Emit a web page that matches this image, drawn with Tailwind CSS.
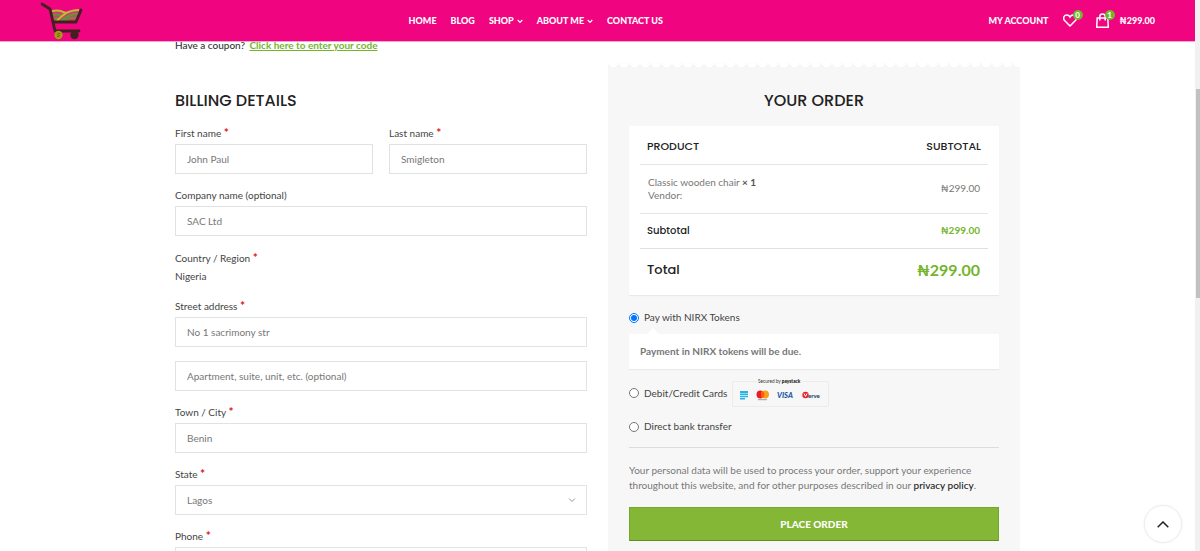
<!DOCTYPE html>
<html lang="en">
<head>
  <meta charset="UTF-8" />
  <meta name="viewport" content="width=device-width, initial-scale=1.0" />
  <title>Checkout</title>
  <script src="https://cdn.jsdelivr.net/npm/@tailwindcss/browser@4"></script>
</head>
<body class="flex h-screen overflow-hidden bg-white font-['Lato',sans-serif] text-[10px] leading-[15px] text-[#777]">

  <div class="relative min-w-0 flex-1 overflow-hidden">

    <!-- Header -->
    <header class="absolute inset-x-0 top-0 z-10 flex h-[42px] items-center justify-between border-b border-[#f7a8d2] bg-[#f0047f] px-10 text-white">
      <a href="#" aria-label="Home">
        <svg class="h-[38px] w-[43px]" viewBox="0 0 43 38" fill="none">
          <path d="M12 9h28l-4 11H14z" fill="#d93a6c" />
          <path d="M12 13c5-1 8 0 10 1M14 17c2-1 4-1 5 0M38 12c-7 0-13 3-18 8" stroke="#5b9a3c" stroke-width="1.800" />
          <path d="M12 9c6-1 11 0 14 3M39 8c-11 0-17 5-23 12" stroke="#b5c22c" stroke-width="2" />
          <path d="M24 19c4-3 8-4 12-3" stroke="#5b9a3c" stroke-width="1.800" />
          <path d="M2 2l8 5 5 22h24M13 20h23l5-12" stroke="#43201f" stroke-width="2.800" stroke-linecap="round" stroke-linejoin="round" />
          <circle cx="18.500" cy="33" r="4.200" fill="#a69a16" />
          <path d="M20 31.500c-3-1-3 1.500-1.500 1.500s1.500 2-1.500 1.500" stroke="#6d6410" />
          <circle cx="34.500" cy="33" r="4.200" fill="#43201f" />
        </svg>
      </a>

      <nav class="flex items-center gap-[14px] text-[9px] font-black">
        <a href="#">HOME</a>
        <a href="#">BLOG</a>
        <a href="#" class="flex items-center gap-[3px]">SHOP
          <svg class="size-[6px]" viewBox="0 0 6 6" fill="none" stroke="currentColor" stroke-width="1.200"><path d="M.7 2L3 4.300 5.300 2" /></svg>
        </a>
        <a href="#" class="flex items-center gap-[3px]">ABOUT ME
          <svg class="size-[6px]" viewBox="0 0 6 6" fill="none" stroke="currentColor" stroke-width="1.200"><path d="M.7 2L3 4.300 5.300 2" /></svg>
        </a>
        <a href="#">CONTACT US</a>
      </nav>

      <div class="flex items-center text-[9px] font-black">
        <a href="#">MY ACCOUNT</a>
        <a href="#" aria-label="Wishlist" class="relative ml-[14px]">
          <svg class="h-[13px] w-[14px]" viewBox="0 0 14 13" fill="none" stroke="currentColor" stroke-width="1.500"><path d="M7 12L1.600 6.500C-.5 4 1.200 1 3.800 1 5.400 1 6.500 2 7 3c.5-1 1.600-2 3.200-2 2.600 0 4.300 3 2.200 5.500z" /></svg>
          <span class="absolute -top-[4px] left-[10px] flex size-[10px] items-center justify-center rounded-full bg-[#73b52b] text-[8px] leading-none">0</span>
        </a>
        <a href="#" class="ml-[19px] flex items-center gap-[11px]">
          <span class="relative">
            <svg class="h-[15px] w-[13px]" viewBox="0 0 13 15" fill="none" stroke="currentColor" stroke-width="1.500"><path d="M1.200 5h10.600l.5 9.200H.7zM3.800 7.500V3.700a2.700 2.700 0 0 1 5.400 0v3.800" /></svg>
            <span class="absolute -top-[3px] left-[9px] flex size-[10px] items-center justify-center rounded-full bg-[#73b52b] text-[8px] leading-none">1</span>
          </span>
          <span>₦299.00</span>
        </a>
      </div>
    </header>

    <!-- Checkout -->
    <main class="mx-auto max-w-[845px] pt-[38px]">
      <p class="font-medium text-[#333]">Have a coupon? <a href="#" class="ml-[2px] font-bold text-[#73b52b] underline">Click here to enter your code</a></p>

      <form class="mt-[9px] grid grid-cols-2 items-start gap-[21px]">

        <!-- Billing -->
        <section class="pt-[29px]">
          <h2 class="mb-[13px] font-['Poppins','Inter',sans-serif] text-[16px] leading-5 font-medium text-[#222]">BILLING DETAILS</h2>

          <div class="grid gap-3 text-[#444]">
            <div class="grid grid-cols-2 gap-4">
              <div>
                <label for="first" class="block pb-[2px] leading-[18px]">First name <span class="text-[12px] leading-none font-bold text-[#e01020]">*</span></label>
                <input id="first" type="text" value="John Paul" class="block h-[30px] w-full border border-[#e2e2e2] px-[11px] text-[#777] outline-none" />
              </div>
              <div>
                <label for="last" class="block pb-[2px] leading-[18px]">Last name <span class="text-[12px] leading-none font-bold text-[#e01020]">*</span></label>
                <input id="last" type="text" value="Smigleton" class="block h-[30px] w-full border border-[#e2e2e2] px-[11px] text-[#777] outline-none" />
              </div>
            </div>
            <div>
              <label for="company" class="block pb-[2px] leading-[18px]">Company name (optional)</label>
              <input id="company" type="text" value="SAC Ltd" class="block h-[30px] w-full border border-[#e2e2e2] px-[11px] text-[#777] outline-none" />
            </div>
            <div>
              <p class="leading-5">Country / Region <span class="text-[12px] leading-none font-bold text-[#e01020]">*</span></p>
              <p class="leading-[17px]">Nigeria</p>
            </div>
            <div>
              <label for="street" class="block pb-[2px] leading-[18px]">Street address <span class="text-[12px] leading-none font-bold text-[#e01020]">*</span></label>
              <input id="street" type="text" value="No 1 sacrimony str" class="block h-[30px] w-full border border-[#e2e2e2] px-[11px] text-[#777] outline-none" />
              <input type="text" aria-label="Apartment" placeholder="Apartment, suite, unit, etc. (optional)" class="mt-[14px] block h-[30px] w-full border border-[#e2e2e2] px-[11px] text-[#777] outline-none placeholder:text-[#777]" />
            </div>
            <div>
              <label for="city" class="block pb-[2px] leading-[18px]">Town / City <span class="text-[12px] leading-none font-bold text-[#e01020]">*</span></label>
              <input id="city" type="text" value="Benin" class="block h-[30px] w-full border border-[#e2e2e2] px-[11px] text-[#777] outline-none" />
            </div>
            <div>
              <label for="state" class="block pb-[2px] leading-[18px]">State <span class="text-[12px] leading-none font-bold text-[#e01020]">*</span></label>
              <div class="relative">
                <select id="state" class="block h-[30px] w-full appearance-none border border-[#e2e2e2] px-[11px] text-[#777] outline-none">
                  <option>Lagos</option>
                </select>
                <svg class="pointer-events-none absolute top-[11px] right-[11px] size-2" viewBox="0 0 8 8" fill="none" stroke="#999"><path d="M1 2.500l3 3 3-3" /></svg>
              </div>
            </div>
            <div>
              <label for="phone" class="block pb-[2px] leading-[18px]">Phone <span class="text-[12px] leading-none font-bold text-[#e01020]">*</span></label>
              <input id="phone" type="tel" class="block h-[30px] w-full border border-[#e2e2e2] px-[11px] text-[#777] outline-none" />
            </div>
          </div>
        </section>

        <!-- Order -->
        <section>
          <div class="h-[6px] bg-[radial-gradient(circle_at_50%_0,#fff_5px,#f7f7f7_5px)] bg-[length:2.59%_6px]"></div>
          <div class="bg-[#f7f7f7] px-[21px] pt-[23px] pb-10">
            <h2 class="mb-[15px] text-center font-['Poppins','Inter',sans-serif] text-[16px] leading-5 font-medium text-[#222]">YOUR ORDER</h2>

            <div class="bg-white px-[11px] pb-[5px] shadow-[0_1px_1px_rgba(0,0,0,0.06)]">
              <table class="w-full">
                <thead class="font-['Poppins','Inter',sans-serif] text-[11px] text-[#222]">
                  <tr class="h-[38px] border-b border-[#e6e6e6]">
                    <th class="px-[7px] pt-1 text-left font-medium">PRODUCT</th>
                    <th class="px-[7px] pt-1 text-right font-medium">SUBTOTAL</th>
                  </tr>
                </thead>
                <tbody>
                  <tr class="h-[49px] border-b border-[#e6e6e6]">
                    <td class="px-2 leading-[13px]">Classic wooden chair <strong class="text-[#555]">× 1</strong><br />Vendor:</td>
                    <td class="px-2 text-right">₦299.00</td>
                  </tr>
                </tbody>
                <tfoot>
                  <tr class="h-[35px] border-b border-[#e0e0e0]">
                    <th class="px-[7px] text-left font-['Poppins','Inter',sans-serif] font-medium text-[#222]">Subtotal</th>
                    <td class="px-2 text-right font-bold text-[#73b52b]">₦299.00</td>
                  </tr>
                  <tr class="h-[42px]">
                    <th class="px-[7px] text-left font-['Poppins','Inter',sans-serif] text-[13px] font-medium text-[#222]">Total</th>
                    <td class="px-2 text-right text-[16px] font-bold text-[#73b52b]">₦299.00</td>
                  </tr>
                </tfoot>
              </table>
            </div>

            <div class="mt-[15px] text-[#444]">
              <label class="flex items-center gap-[5px]"><input type="radio" name="payment" checked class="size-[10px]" />Pay with NIRX Tokens</label>
              <div class="relative mt-[9px] bg-white px-[11px] py-[10px] font-bold text-[#777] shadow-[0_1px_1px_rgba(0,0,0,0.06)]">
                <span class="absolute -top-[6px] left-[18px] border-x-[6px] border-b-[6px] border-x-transparent border-b-white"></span>
                Payment in NIRX tokens will be due.
              </div>

              <label class="mt-[9px] flex h-[30px] items-center gap-[5px]"><input type="radio" name="payment" class="size-[10px]" />Debit/Credit Cards
                <svg class="h-[30px] w-[97px]" viewBox="0 0 97 30" font-family="Lato, sans-serif">
                  <path d="M25 3.500H.5v25h96v-25H70" fill="none" stroke="#ececec" />
                  <text x="26" y="4.500" font-size="4.700" fill="#333">Secured by <tspan font-weight="900" fill="#111">paystack</tspan></text>
                  <path d="M8 13h8v2H8zM8 15.500h8v1.500H8zM8 17.800h8v1.500H8zM8 20h5v1.500H8z" fill="#29b2e8" />
                  <circle cx="28.500" cy="16.500" r="4" fill="#eb1c26" />
                  <circle cx="33" cy="16.500" r="4" fill="#f79e1b" />
                  <path d="M30.700 13.200a4 4 0 0 1 0 6.600 4 4 0 0 1 0-6.600z" fill="#ff5f00" />
                  <path d="M26 21.700h9" stroke="#777" stroke-width=".7" />
                  <text x="45" y="20" font-size="7.500" font-weight="900" font-style="italic" fill="#1a5aa5">VISA</text>
                  <circle cx="73.500" cy="17" r="3.200" fill="#e5262b" />
                  <path d="M72 15.500l1.500 3 1.500-3" fill="none" stroke="#fff" />
                  <text x="76" y="19.500" font-size="6" font-weight="900" fill="#1f4560">erve</text>
                </svg>
              </label>

              <label class="mt-[11px] flex items-center gap-[5px]"><input type="radio" name="payment" class="size-[10px]" />Direct bank transfer</label>
            </div>

            <p class="mt-[13px] border-t border-[#dcdcdc] pt-[15px]">Your personal data will be used to process your order, support your experience throughout this website, and for other purposes described in our <a href="#" class="font-medium text-[#222]">privacy policy</a>.</p>
            <button type="submit" class="mt-[14px] block h-[34px] w-full border border-[#74a72c] border-b-[#5d9020] bg-[#83b735] font-black text-white">PLACE ORDER</button>
          </div>
        </section>
      </form>
    </main>

    <button type="button" aria-label="Back to top" class="absolute right-[13px] bottom-2 flex size-[38px] items-center justify-center rounded-full border border-[#eee] bg-white shadow-[0_0_3px_rgba(0,0,0,0.06)]">
      <svg class="h-[7px] w-3" viewBox="0 0 12 7" fill="none" stroke="#222" stroke-width="1.500"><path d="M.7 6.300L6 1l5.300 5.300" /></svg>
    </button>
  </div>

  <!-- Scroll track -->
  <div class="w-[5px] bg-[#f1f1f1] pt-[89px]">
    <div class="ml-px h-[209px] bg-[#c1c1c1]"></div>
  </div>

</body>
</html>
